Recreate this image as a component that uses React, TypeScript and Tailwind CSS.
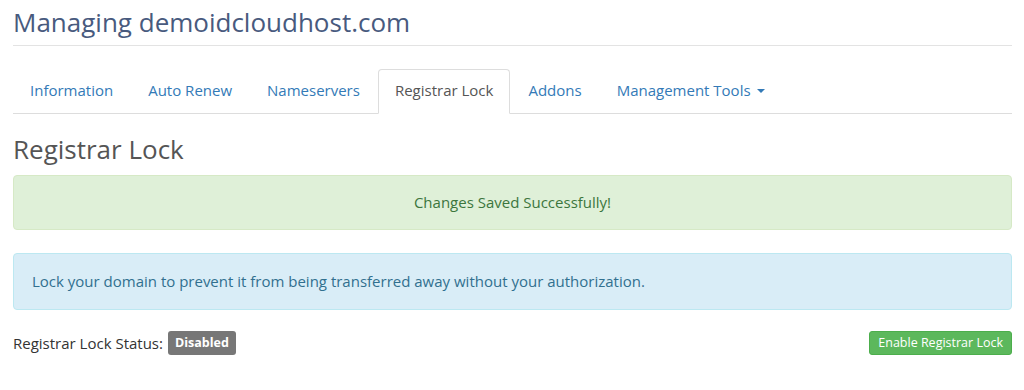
const tabs = ['Information', 'Auto Renew', 'Nameservers', 'Registrar Lock', 'Addons'];

export default function App() {
  return (
    <div className="min-h-[390px] bg-white px-[13px] pr-[12px] font-['Open_Sans',sans-serif]">
      <h1 className="border-b border-[#e3e3e3] pt-[4px] pb-[5px] text-[26px] leading-[36px] font-normal text-[#485a7e]">
        Managing demoidcloudhost.com
      </h1>

      <ul className="mt-[23px] flex border-b border-[#ddd]">
        {tabs.map((t) => {
          const active = t === 'Registrar Lock';
          return (
            <li key={t} className="-mb-px mr-px">
              <a
                className={
                  active
                    ? 'block rounded-t-[4px] border border-[#ddd] border-b-transparent bg-white px-[16px] pt-[9px] pb-[11px] text-[15px] leading-[23px] text-[#555]'
                    : 'block border border-transparent px-[16px] pt-[9px] pb-[11px] text-[15px] leading-[23px] text-[#337ab7]'
                }
              >
                {t}
              </a>
            </li>
          );
        })}
        <li className="-mb-px">
          <a className="flex items-center border border-transparent px-[16px] pt-[9px] pb-[11px] text-[15px] leading-[23px] text-[#337ab7]">
            Management Tools
            <span className="ml-[6px] inline-block h-0 w-0 border-x-[4px] border-t-[4px] border-x-transparent border-t-[#337ab7]" />
          </a>
        </li>
      </ul>

      <h2 className="mt-[17px] mb-[8px] text-[26px] leading-[36px] font-normal text-[#555]">Registrar Lock</h2>

      <div className="rounded-[4px] border border-[#d6e9c6] bg-[#dff0d8] py-[14px] text-center text-[15px] leading-[25px] text-[#3c763d]">
        Changes Saved Successfully!
      </div>

      <div className="mt-[23px] rounded-[4px] border border-[#bce8f1] bg-[#d9edf7] px-[18px] py-[15px] text-[15px] leading-[25px] text-[#31708f]">
        Lock your domain to prevent it from being transferred away without your authorization.
      </div>

      <div className="mt-[21px] flex items-center justify-between">
        <div className="flex items-center text-[15px] leading-[24px] text-[#333]">
          Registrar Lock Status:
          <span className="ml-[5px] rounded-[3px] bg-[#777] px-[7px] text-[12.5px] leading-[24px] font-bold text-white">
            Disabled
          </span>
        </div>
        <button className="rounded-[3px] border border-[#4cae4c] bg-[#5cb85c] px-[8px] text-[12.5px] leading-[22px] text-white">
          Enable Registrar Lock
        </button>
      </div>
    </div>
  );
}
